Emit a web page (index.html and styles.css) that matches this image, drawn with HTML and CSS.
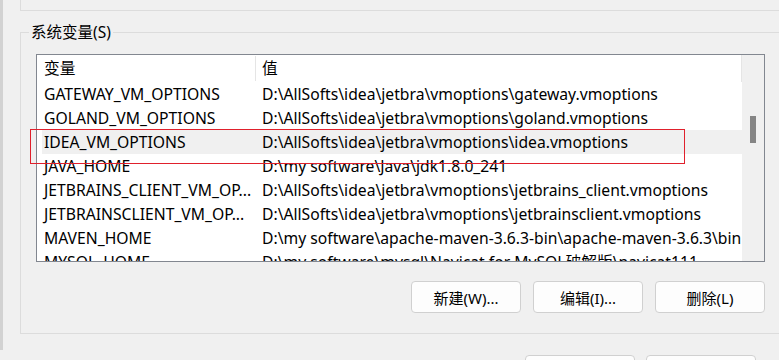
FILE: index.html
```html
<!DOCTYPE html>
<html lang="zh-CN">
<head>
    <meta charset="UTF-8">
    <meta name="viewport" content="width=device-width, initial-scale=1.0">
    <title>环境变量</title>
    <link rel="stylesheet" href="styles.css">
</head>
<body>

    <div class="frame">
        <div class="group-upper"></div>

        <div class="group">
            <div class="group-title">系统变量(S)</div>

            <div class="list">
                <div class="rows">
                    <div class="row header">
                        <div class="cell">变量</div>
                        <div class="cell sep">值</div>
                    </div>
                    <div class="row">
                        <div class="cell">GATEWAY_VM_OPTIONS</div>
                        <div class="cell">D:\AllSofts\idea\jetbra\vmoptions\gateway.vmoptions</div>
                    </div>
                    <div class="row">
                        <div class="cell">GOLAND_VM_OPTIONS</div>
                        <div class="cell">D:\AllSofts\idea\jetbra\vmoptions\goland.vmoptions</div>
                    </div>
                    <div class="row selected">
                        <div class="cell">IDEA_VM_OPTIONS</div>
                        <div class="cell">D:\AllSofts\idea\jetbra\vmoptions\idea.vmoptions</div>
                    </div>
                    <div class="row">
                        <div class="cell">JAVA_HOME</div>
                        <div class="cell">D:\my software\Java\jdk1.8.0_241</div>
                    </div>
                    <div class="row">
                        <div class="cell">JETBRAINS_CLIENT_VM_OP...</div>
                        <div class="cell">D:\AllSofts\idea\jetbra\vmoptions\jetbrains_client.vmoptions</div>
                    </div>
                    <div class="row">
                        <div class="cell">JETBRAINSCLIENT_VM_OP...</div>
                        <div class="cell">D:\AllSofts\idea\jetbra\vmoptions\jetbrainsclient.vmoptions</div>
                    </div>
                    <div class="row">
                        <div class="cell">MAVEN_HOME</div>
                        <div class="cell">D:\my software\apache-maven-3.6.3-bin\apache-maven-3.6.3\bin</div>
                    </div>
                    <div class="row">
                        <div class="cell">MYSQL_HOME</div>
                        <div class="cell">D:\my software\mysql\Navicat for MySQL破解版\navicat111</div>
                    </div>
                </div>
                <div class="scrollbar">
                    <div class="thumb"></div>
                </div>
                <div class="highlight-box"></div>
            </div>

            <div class="actions">
                <button>新建(W)...</button>
                <button>编辑(I)...</button>
                <button>删除(L)</button>
            </div>
        </div>

        <div class="dialog-actions">
            <button></button>
            <button></button>
        </div>
    </div>

</body>
</html>
```

FILE: styles.css
```css
body {
    margin: 0;
    background-color: #f0f0f0;
    font-family: 'Noto Sans', 'Noto Sans CJK SC', sans-serif;
    font-size: 15px;
    color: #000;
    overflow: hidden;
    height: 360px;
}

.frame {
    height: 350px;
    border-left: 3px solid #d2d2d2;
}

.group-upper {
    height: 10px;
    margin-left: 17px;
    margin-right: -20px;
    border-left: 1px solid #dcdcdc;
    border-bottom: 1px solid #dcdcdc;
}

.group {
    margin-top: 21px;
    margin-left: 17px;
    margin-right: -20px;
    height: 300px;
    border: 1px solid #dcdcdc;
}

.group-title {
    width: fit-content;
    margin: -11px 0 0 8px;
    padding: 0 2px;
    height: 20px;
    line-height: 20px;
    font-size: 15.5px;
    background-color: #f0f0f0;
}

.list {
    position: relative;
    display: flex;
    width: 727px;
    height: 206px;
    margin: 12px 0 0 15px;
    border: 1px solid #828790;
    background-color: #fff;
    font-size: 15.7px;
}

.rows {
    width: 705px;
    overflow: hidden;
}

.row {
    display: grid;
    grid-template-columns: 213px 1fr;
    height: 24px;
    line-height: 24px;
    margin-left: 5px;
    white-space: nowrap;
}

.row .cell {
    padding-left: 2px;
    overflow: hidden;
}

.row .cell + .cell {
    padding-left: 7px;
}

.row.header {
    height: 27px;
    line-height: 27px;
    border-right: 1px solid #e5e5e5;
}

.row.header .sep {
    border-left: 1px solid #e5e5e5;
    padding-left: 6px;
    height: 25px;
    margin-top: 1px;
    line-height: 25px;
}

.row.selected {
    background-color: #f0f0f0;
}

.scrollbar {
    flex: 1;
    background-color: #f0f0f0;
    display: flex;
    justify-content: center;
}

.thumb {
    width: 6px;
    height: 27px;
    margin-top: 61px;
    background-color: #858585;
}

.highlight-box {
    position: absolute;
    left: -7px;
    top: 74px;
    width: 655px;
    height: 35px;
    box-sizing: border-box;
    border: 1px solid #e0202c;
}

.actions {
    display: flex;
    justify-content: flex-end;
    gap: 12px;
    width: 729px;
    margin: 19px 0 0 15px;
}

button {
    width: 110px;
    height: 32px;
    padding: 0;
    font-family: 'Noto Sans', 'Noto Sans CJK SC', sans-serif;
    font-size: 15px;
    color: #000;
    background-color: #fdfdfd;
    border: 1px solid #d0d0d0;
    border-radius: 4px;
}

.dialog-actions {
    display: flex;
    justify-content: flex-end;
    gap: 11px;
    height: 5px;
    overflow: hidden;
    margin-top: 21px;
    padding-right: 23px;
}

.dialog-actions button {
    flex-shrink: 0;
}
```
